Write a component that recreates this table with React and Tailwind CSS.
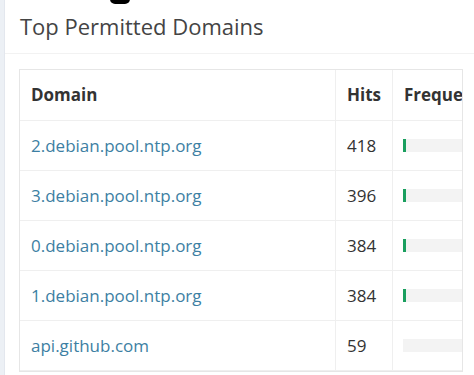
const rows = [
  { domain: "2.debian.pool.ntp.org", hits: 418, pct: 3 },
  { domain: "3.debian.pool.ntp.org", hits: 396, pct: 3 },
  { domain: "0.debian.pool.ntp.org", hits: 384, pct: 3 },
  { domain: "1.debian.pool.ntp.org", hits: 384, pct: 3 },
  { domain: "api.github.com", hits: 59, pct: 0 },
];

function Bar({ pct }) {
  return (
    <div className="h-[13px] w-[100px] bg-[#f3f3f3]">
      <div className="h-full bg-[#1a9f5f]" style={{ width: `${pct}%` }} />
    </div>
  );
}

export default function App() {
  return (
    <div
      className="relative h-[375px] overflow-hidden bg-[#ecf0f5] pl-[4px]"
      style={{ fontFamily: '"Open Sans", "Noto Sans", sans-serif' }}
    >
      <div className="absolute left-[110px] top-[-6px] h-[10px] w-[20px] rounded-full bg-black" />
      <div className="h-full border-l border-[#e3e7ee] bg-white">
        <div className="flex h-[54px] items-center border-b border-[#f2f2f2] pl-[15px]">
          <h3 className="text-[22px] text-[#444]">Top Permitted Domains</h3>
        </div>
        <div className="pl-[14px] pt-[15px]">
          <div className="w-[444px] overflow-hidden border border-[#e6e6e6]">
            <div className="flex w-[560px] text-[17px] text-[#333]">
              <div className="w-[315px] shrink-0">
                <div className="flex h-[51px] items-center border-b border-[#efefef] pl-[11px] font-bold">
                  Domain
                </div>
                {rows.map((r) => (
                  <div
                    key={r.domain}
                    className="flex h-[50px] items-center border-b border-[#efefef] pl-[11px] text-[#3d7fa3]"
                  >
                    {r.domain}
                  </div>
                ))}
              </div>
              <div className="w-[57px] shrink-0 border-l border-[#efefef]">
                <div className="flex h-[51px] items-center border-b border-[#efefef] pl-[11px] font-bold">
                  Hits
                </div>
                {rows.map((r) => (
                  <div
                    key={r.domain}
                    className="flex h-[50px] items-center border-b border-[#efefef] pl-[11px]"
                  >
                    {r.hits}
                  </div>
                ))}
              </div>
              <div className="flex-1 border-l border-[#efefef]">
                <div className="flex h-[51px] items-center border-b border-[#efefef] pl-[11px] font-bold">
                  Frequency
                </div>
                {rows.map((r) => (
                  <div
                    key={r.domain}
                    className="flex h-[50px] items-center border-b border-[#efefef] pl-[10px]"
                  >
                    <Bar pct={r.pct} />
                  </div>
                ))}
              </div>
            </div>
          </div>
        </div>
      </div>
    </div>
  );
}
